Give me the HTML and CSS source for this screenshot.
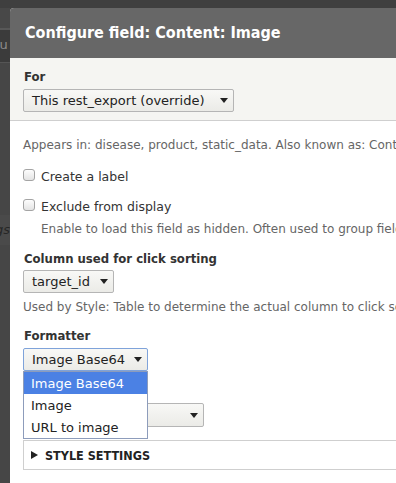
FILE: index.html
```html
<!DOCTYPE html>
<html>
<head>
<meta charset="utf-8">
<link rel="stylesheet" href="styles.css">
</head>
<body>
<div class="topstrip"></div>
<div class="page">
  <div class="side">
    <div class="side-a"></div>
    <div class="side-b"><span>lu</span></div>
    <div class="side-c"></div>
    <div class="side-d"><span>gs</span></div>
    <div class="side-e"></div>
  </div>
  <div class="dialog">
    <div class="titlebar">Configure field: Content: Image</div>
    <div class="for-section">
      <div class="label">For</div>
      <div class="select sel-for"><span>This rest_export (override)</span><i class="arrow"></i></div>
    </div>
    <div class="body">
      <div class="desc appears">Appears in: disease, product, static_data. Also known as: Content: Image</div>
      <div class="check row1"><span class="box"></span><span>Create a label</span></div>
      <div class="check row2"><span class="box"></span><span>Exclude from display</span></div>
      <div class="desc indent">Enable to load this field as hidden. Often used to group fields, or to use as token in another field.</div>
      <div class="label lbl-col">Column used for click sorting</div>
      <div class="select sel-col"><span>target_id</span><i class="arrow"></i></div>
      <div class="desc desc2">Used by Style: Table to determine the actual column to click sort the field on.</div>
      <div class="label lbl-fmt">Formatter</div>
      <div class="fmt-wrap">
        <div class="select sel-fmt focused"><span>Image Base64</span><i class="arrow"></i></div>
        <ul class="popup">
          <li class="active">Image Base64</li>
          <li>Image</li>
          <li>URL to image</li>
        </ul>
      </div>
      <div class="select sel-style"><span>Original image</span><i class="arrow"></i></div>
      <div class="details"><i class="tri"></i><span>STYLE SETTINGS</span></div>
    </div>
  </div>
</div>
</body>
</html>
```

FILE: styles.css
```css
html, body {
  margin: 0;
  padding: 0;
  width: 396px;
  height: 483px;
  overflow: hidden;
  background: #404040;
  font-family: "DejaVu Sans", "Liberation Sans", sans-serif;
}
.topstrip {
  height: 8px;
  background: #3f3f3f;
}
.page {
  display: flex;
  height: 475px;
}
.side {
  width: 10px;
  flex: none;
  display: flex;
  flex-direction: column;
  overflow: hidden;
}
.side-a { height: 20px; background: #484848; border-bottom: 2px solid #585858; }
.side-b { height: 32px; background: #3b3b3b; color: #8c8c8c; font-size: 13px; line-height: 30px; white-space: nowrap; margin-left: -4px; border-bottom: 1px solid #555; }
.side-c { height: 152px; background: #464646; }
.side-d { height: 30px; background: #4a4a4a; color: #262626; font-size: 13px; font-style: italic; line-height: 30px; white-space: nowrap; margin-left: -5px; }
.side-e { flex: 1; background: #464646; }

.dialog {
  flex: none;
  width: 440px;
  background: #fff;
  border-top-left-radius: 4px;
  overflow: hidden;
}
.titlebar {
  height: 50px;
  background: #676767;
  color: #fff;
  font-family: "DejaVu Sans Condensed", "DejaVu Sans", sans-serif;
  font-weight: bold;
  font-size: 16px;
  line-height: 50px;
  padding-left: 15px;
  white-space: nowrap;
}
.for-section {
  height: 63px;
  background: #f5f5f2;
  border-bottom: 1px solid #cfcfcf;
  padding: 10px 0 0 13px;
  box-sizing: border-box;
}
.label {
  font-family: "DejaVu Sans Condensed", "DejaVu Sans", sans-serif;
  font-weight: bold;
  font-size: 13px;
  color: #333;
  line-height: 18px;
  padding-left: 1px;
}
.select {
  box-sizing: border-box;
  height: 23px;
  border: 1px solid #b5b5b5;
  border-radius: 2px;
  background: linear-gradient(#f8f8f6, #ebebe7);
  display: flex;
  align-items: center;
  justify-content: space-between;
  padding: 0 5px 0 8px;
  font-size: 13px;
  color: #222;
  white-space: nowrap;
}
.arrow {
  flex: none;
  width: 0; height: 0;
  border-left: 4px solid transparent;
  border-right: 4px solid transparent;
  border-top: 5px solid #222;
}
.sel-for { width: 211px; margin-top: 3px; }
.body {
  padding: 15px 0 0 13px;
}
.desc {
  font-size: 12px;
  color: #666;
  line-height: 18px;
  white-space: nowrap;
}
.check {
  display: flex;
  align-items: flex-start;
  font-size: 12.5px;
  color: #333;
  line-height: 18px;
  height: 18px;
  white-space: nowrap;
}
.box {
  flex: none;
  box-sizing: border-box;
  width: 12px; height: 12px;
  margin-top: 1px;
  border: 1px solid #a4a4a4;
  border-radius: 3px;
  background: linear-gradient(#fdfdfd, #e4e4e4);
  margin-right: 6px;
}
.row1 { margin-top: 14px; }
.row2 { margin-top: 12px; }
.indent { margin-left: 18px; margin-top: 4px; }
.lbl-col { margin-top: 12px; }
.sel-col { width: 91px; margin-top: 2px; }
.desc2 { margin-top: 5px; }
.lbl-fmt { margin-top: 11px; }
.fmt-wrap { position: relative; margin-top: 3px; width: 125px; }
.sel-fmt { width: 125px; }
.focused { border-color: #7fa3da; }
.popup {
  position: absolute;
  left: 0; top: 23px;
  width: 125px;
  box-sizing: border-box;
  margin: 0; padding: 0;
  list-style: none;
  background: #fff;
  border: 1px solid #8d9cbb;
  z-index: 2;
}
.popup li {
  height: 22px;
  line-height: 23px;
  padding-left: 7px;
  font-size: 13px;
  color: #222;
}
.popup li.active { background: #4b81e4; color: #fff; }
.sel-style { width: 181px; margin-top: 32px; height: 24px; }
.details {
  margin-top: 13px;
  height: 30px;
  box-sizing: border-box;
  border: 1px solid #cfcfcf;
  border-right: none;
  display: flex;
  align-items: center;
  padding-left: 7px;
  font-family: "DejaVu Sans Condensed", "DejaVu Sans", sans-serif;
  font-weight: bold;
  font-size: 12.5px;
  color: #222;
}
.tri {
  flex: none;
  width: 0; height: 0;
  border-top: 4.5px solid transparent;
  border-bottom: 4.5px solid transparent;
  border-left: 7px solid #222;
  margin-right: 7px;
}
```
